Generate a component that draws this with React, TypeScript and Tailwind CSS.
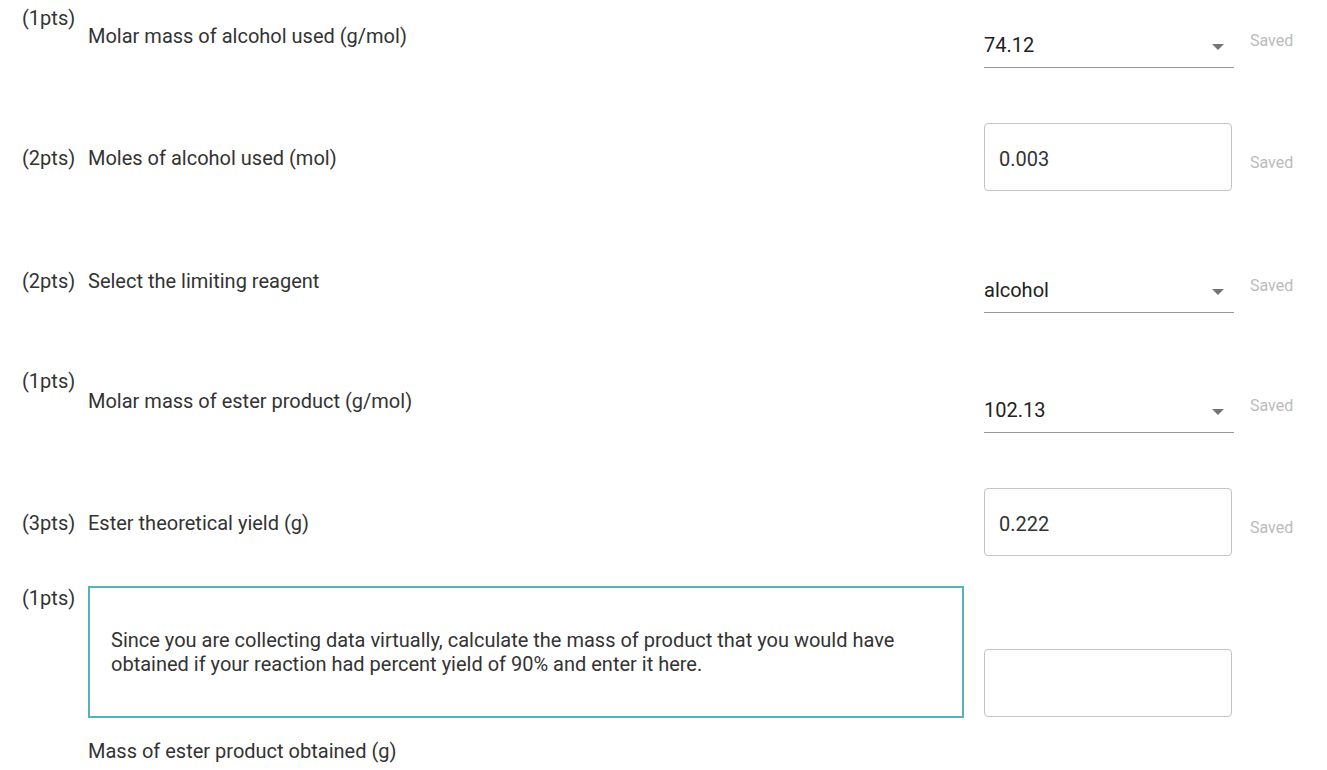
import React from 'react';

const font = { fontFamily: 'Roboto, "Noto Sans", sans-serif' };

function Pts({ n, mt }: { n: number; mt: string }) {
    return <div className={`w-[66px] shrink-0 text-[20px] leading-6 text-[#333] ${mt}`}>({n}pts)</div>;
}

function Saved({ mt }: { mt: string }) {
    return <div className={`ml-4 text-[16px] leading-5 text-[#bbb] ${mt}`}>Saved</div>;
}

function SelectBox({ value, mt }: { value: string; mt: string }) {
    return (
        <div className={`ml-5 w-[250px] shrink-0 ${mt}`}>
            <div className="flex items-center justify-between pt-[3px] pb-[10px] border-b border-[#999]">
                <span className="text-[20px] leading-6 text-[#222]">{value}</span>
                <span className="mr-[10px] mt-[4px] w-0 h-0 border-l-[6px] border-r-[6px] border-t-[6px] border-l-transparent border-r-transparent border-t-[#757575]" />
            </div>
        </div>
    );
}

function InputBox({ value, mt }: { value: string; mt: string }) {
    return (
        <div className={`ml-5 w-[250px] shrink-0 ${mt}`}>
            <div className="w-[248px] h-[68px] border border-[#c4c4c4] rounded-[4px] flex items-center px-[14px] pt-[3px] text-[20px] text-[#333]">
                {value}
            </div>
        </div>
    );
}

export default function App() {
    return (
        <div className="bg-white min-h-screen pl-[22px]" style={font}>
            {/* row 1 */}
            <div className="flex items-start h-[100px]">
                <Pts n={1} mt="mt-[6px]" />
                <div className="w-[876px] shrink-0 mt-[24px] text-[20px] leading-6 text-[#333]">Molar mass of alcohol used (g/mol)</div>
                <SelectBox value="74.12" mt="mt-[30px]" />
                <Saved mt="mt-[31px]" />
            </div>

            {/* row 2 */}
            <div className="flex items-start h-[120px]">
                <Pts n={2} mt="mt-[46px]" />
                <div className="w-[876px] shrink-0 mt-[46px] text-[20px] leading-6 text-[#333]">Moles of alcohol used (mol)</div>
                <InputBox value="0.003" mt="mt-[23px]" />
                <Saved mt="mt-[53px]" />
            </div>

            {/* row 3 */}
            <div className="flex items-start h-[120px]">
                <Pts n={2} mt="mt-[49px]" />
                <div className="w-[876px] shrink-0 mt-[49px] text-[20px] leading-6 text-[#333]">Select the limiting reagent</div>
                <SelectBox value="alcohol" mt="mt-[55px]" />
                <Saved mt="mt-[56px]" />
            </div>

            {/* row 4 */}
            <div className="flex items-start h-[120px]">
                <Pts n={1} mt="mt-[29px]" />
                <div className="w-[876px] shrink-0 mt-[49px] text-[20px] leading-6 text-[#333]">Molar mass of ester product (g/mol)</div>
                <SelectBox value="102.13" mt="mt-[55px]" />
                <Saved mt="mt-[56px]" />
            </div>

            {/* row 5 */}
            <div className="flex items-start h-[115px]">
                <Pts n={3} mt="mt-[51px]" />
                <div className="w-[876px] shrink-0 mt-[51px] text-[20px] leading-6 text-[#333]">Ester theoretical yield (g)</div>
                <InputBox value="0.222" mt="mt-[28px]" />
                <Saved mt="mt-[58px]" />
            </div>

            {/* row 6 */}
            <div className="flex items-start">
                <Pts n={1} mt="mt-[11px]" />
                <div className="w-[876px] shrink-0 mt-[11px]">
                    <div className="h-[132px] border-2 border-[#56b1b9] pt-[40px] pl-[21px] pr-[40px] text-[20px] leading-6 text-[#333]">
                        Since you are collecting data virtually, calculate the mass of product that you would have obtained if your reaction had percent yield of 90% and enter it here.
                    </div>
                    <div className="mt-[21px] text-[20px] leading-6 text-[#333]">Mass of ester product obtained (g)</div>
                </div>
                <InputBox value="" mt="mt-[74px]" />
            </div>
        </div>
    );
}
